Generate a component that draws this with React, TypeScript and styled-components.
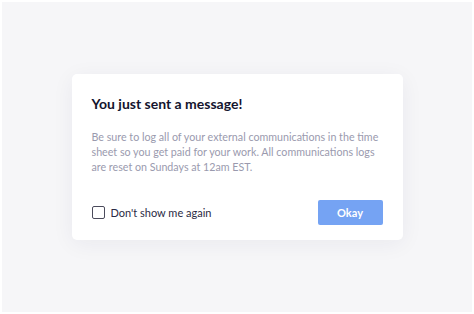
import React, { useState } from 'react';
import styled, { createGlobalStyle } from 'styled-components';

const GlobalStyle = createGlobalStyle`
  html, body {
    margin: 0;
    padding: 0;
    background: #ffffff;
  }
  body {
    font-family: Lato, "Open Sans", "Liberation Sans", sans-serif;
  }
`;

const Page = styled.div`
  box-sizing: border-box;
  margin: 2px;
  height: 310px;
  background-color: #f6f6f8;
  display: flex;
  align-items: center;
  justify-content: center;
`;

const Card = styled.div`
  box-sizing: border-box;
  width: 331px;
  height: 166px;
  padding: 20px 20px 15px;
  background-color: #ffffff;
  border-radius: 5px;
  box-shadow: 0 4px 22px rgba(40, 40, 80, 0.06);
  display: flex;
  flex-direction: column;
`;

const Title = styled.h2`
  margin: 0;
  font-size: 14px;
  line-height: 20px;
  font-weight: 700;
  color: #14142e;
`;

const Body = styled.p`
  margin: 15px 0 0;
  font-size: 10.7px;
  line-height: 15px;
  color: #9a9aae;
`;

const Footer = styled.div`
  margin-top: auto;
  display: flex;
  align-items: center;
  justify-content: space-between;
`;

const CheckLabel = styled.label`
  display: flex;
  align-items: center;
  gap: 6px;
  font-size: 11px;
  color: #2a2a44;
  cursor: pointer;
  user-select: none;
`;

const Box = styled.span<{ checked: boolean }>`
  box-sizing: border-box;
  width: 13px;
  height: 13px;
  border: 1.5px solid #4b4b5c;
  border-radius: 2px;
  background-color: ${props => props.checked ? '#4b4b5c' : '#ffffff'};
`;

const HiddenInput = styled.input`
  display: none;
`;

const OkayButton = styled.button`
  width: 65px;
  height: 25px;
  border: none;
  border-radius: 2px;
  background-color: #75a3f3;
  color: #ffffff;
  font-family: inherit;
  font-size: 11px;
  font-weight: 700;
  cursor: pointer;

  &:hover {
    background-color: #6396ef;
  }
`;

export default function App() {
  const [dontShow, setDontShow] = useState(false);

  return (
    <>
      <GlobalStyle />
      <Page>
        <Card>
          <Title>You just sent a message!</Title>
          <Body>
            Be sure to log all of your external communications in the time
            sheet so you get paid for your work. All communications logs
            are reset on Sundays at 12am EST.
          </Body>
          <Footer>
            <CheckLabel>
              <HiddenInput
                type="checkbox"
                checked={dontShow}
                onChange={e => setDontShow(e.target.checked)}
              />
              <Box checked={dontShow} />
              Don't show me again
            </CheckLabel>
            <OkayButton>Okay</OkayButton>
          </Footer>
        </Card>
      </Page>
    </>
  );
}
